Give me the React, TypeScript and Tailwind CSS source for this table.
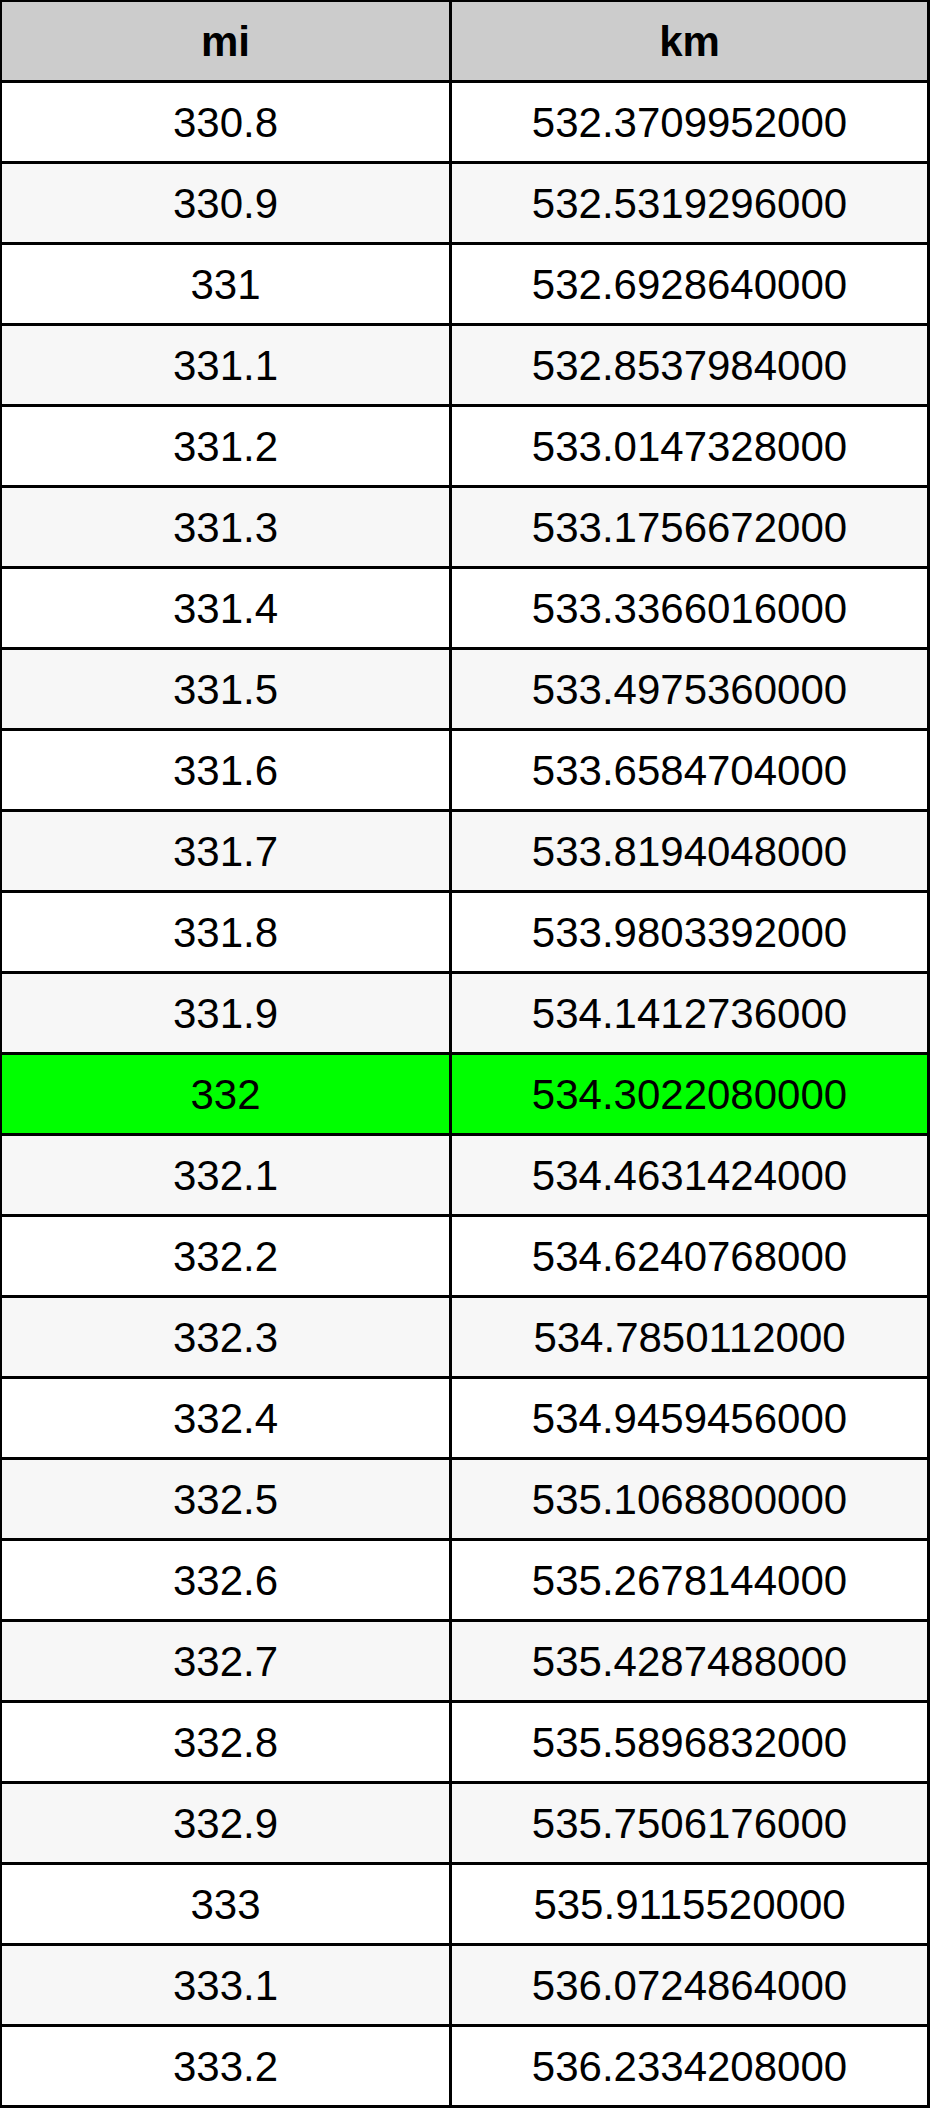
import React from "react";

const rows: [string, string][] = [
  ["330.8", "532.3709952000"],
  ["330.9", "532.5319296000"],
  ["331", "532.6928640000"],
  ["331.1", "532.8537984000"],
  ["331.2", "533.0147328000"],
  ["331.3", "533.1756672000"],
  ["331.4", "533.3366016000"],
  ["331.5", "533.4975360000"],
  ["331.6", "533.6584704000"],
  ["331.7", "533.8194048000"],
  ["331.8", "533.9803392000"],
  ["331.9", "534.1412736000"],
  ["332", "534.3022080000"],
  ["332.1", "534.4631424000"],
  ["332.2", "534.6240768000"],
  ["332.3", "534.7850112000"],
  ["332.4", "534.9459456000"],
  ["332.5", "535.1068800000"],
  ["332.6", "535.2678144000"],
  ["332.7", "535.4287488000"],
  ["332.8", "535.5896832000"],
  ["332.9", "535.7506176000"],
  ["333", "535.9115520000"],
  ["333.1", "536.0724864000"],
  ["333.2", "536.2334208000"],
];

export default function App() {
  return (
    <div className="w-[930px] bg-white" style={{ fontFamily: '"Liberation Sans", Arial, sans-serif' }}>
      <div className="bg-black pt-[2px] pl-[2px] pr-[3px] pb-[3px] grid grid-cols-[447px_475px] gap-[3px]">
        <div className="h-[78px] bg-[#cccccc] flex items-center justify-center text-[42px] font-bold text-black">mi</div>
        <div className="h-[78px] bg-[#cccccc] flex items-center justify-center text-[42px] font-bold text-black">km</div>
        {rows.map(([mi, km], i) => {
          const bg = mi === "332" ? "bg-[#00ff00]" : i % 2 === 1 ? "bg-[#f7f7f7]" : "bg-white";
          return (
            <React.Fragment key={mi}>
              <div className={`h-[78px] ${bg} flex items-center justify-center text-[42px] text-black`}>{mi}</div>
              <div className={`h-[78px] ${bg} flex items-center justify-center text-[42px] text-black`}>{km}</div>
            </React.Fragment>
          );
        })}
      </div>
    </div>
  );
}
